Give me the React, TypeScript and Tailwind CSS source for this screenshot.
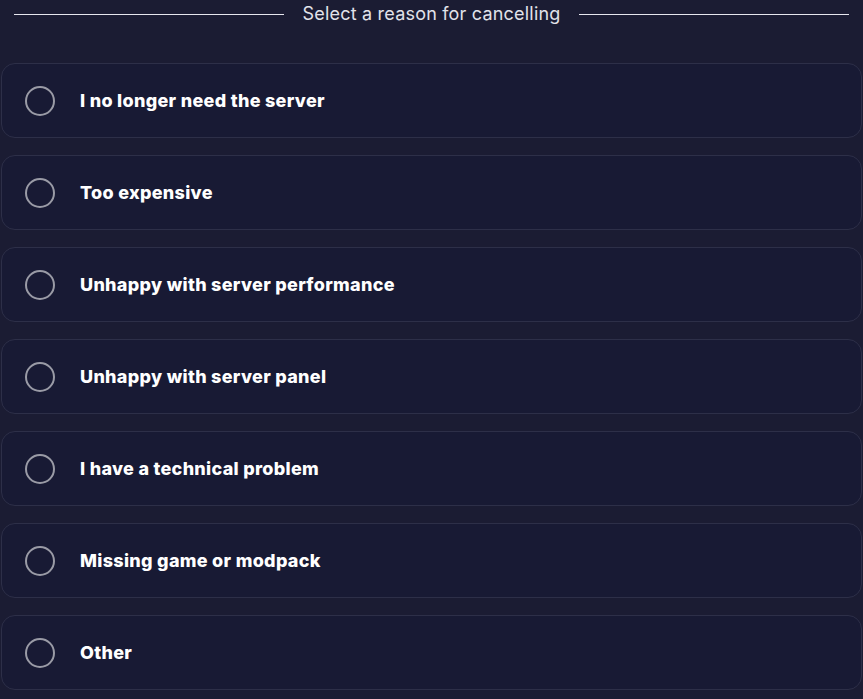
import { useState } from "react";

const reasons = [
  "I no longer need the server",
  "Too expensive",
  "Unhappy with server performance",
  "Unhappy with server panel",
  "I have a technical problem",
  "Missing game or modpack",
  "Other",
];

export default function App() {
  const [selected, setSelected] = useState<number | null>(null);

  return (
    <div
      className="min-h-screen bg-[#1b1c33] px-px"
      style={{ fontFamily: "Inter, 'Noto Sans', sans-serif" }}
    >
      {/* Heading with rules */}
      <div className="flex items-center gap-[18px] px-[13px] h-[28px]">
        <div className="flex-1 h-px bg-[#e6e6ee]" />
        <span className="text-[18px] text-[#e2e3ea] leading-none tracking-[0.2px]">
          Select a reason for cancelling
        </span>
        <div className="flex-1 h-px bg-[#e6e6ee]" />
      </div>

      {/* Options */}
      <div className="flex flex-col gap-[17px] mt-[35px]">
        {reasons.map((reason, i) => (
          <button
            key={reason}
            onClick={() => setSelected(i)}
            className="flex items-center h-[75px] pl-[23px] rounded-[14px] border border-[#2d2f48] bg-[#181a34] text-left"
          >
            <span
              className={`w-[30px] h-[30px] rounded-full border-2 shrink-0 ${
                selected === i ? "border-white bg-white" : "border-[#9a9ba6]"
              }`}
            />
            <span className="ml-[25px] text-[18px] font-extrabold text-white tracking-[0.3px]">
              {reason}
            </span>
          </button>
        ))}
      </div>
    </div>
  );
}
